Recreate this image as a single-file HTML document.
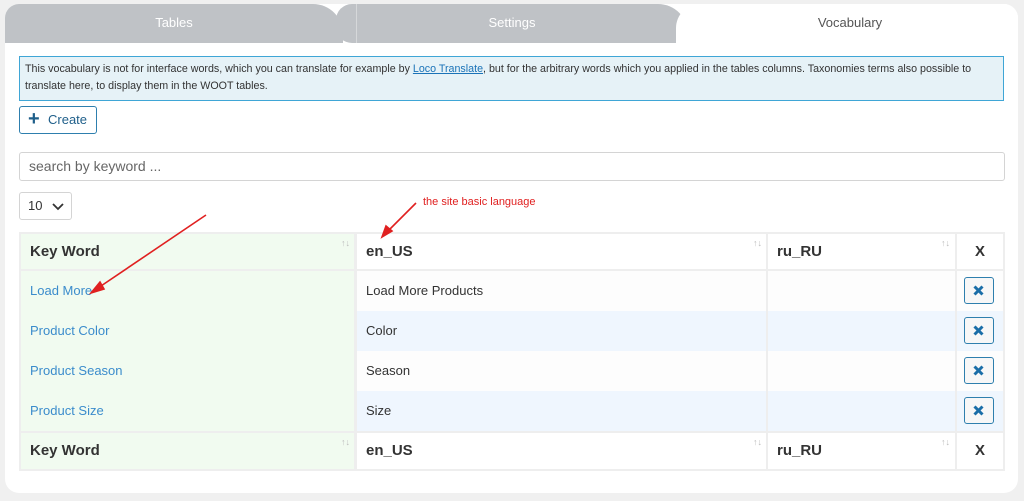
<!DOCTYPE html>
<html><head><meta charset="utf-8"><style>
*{box-sizing:border-box;margin:0;padding:0}
body{width:1024px;height:501px;background:#f0f0f0;font-family:"Liberation Sans",sans-serif;position:relative;overflow:hidden}
.a{position:absolute}
.panel{left:5px;top:4px;width:1013px;height:489px;background:#fff;border-radius:14px}
.tab{top:4px;height:39px;background:#bfc2c6;color:#fff;font-size:13px;text-align:center;line-height:38px}
.info{left:19px;top:56px;width:985px;height:45px;background:#e6f2f7;border:1px solid #3fa6d6;font-size:10.7px;color:#333;line-height:17px;padding:4px 5px}
.info a{color:#1a73b8;text-decoration:underline}
.btn{left:19px;top:106px;width:78px;height:28px;border:1px solid #2e7fae;border-radius:3px;color:#1f5f8a;font-size:13px;line-height:26px;padding-left:28px}
.search{left:19px;top:152px;width:986px;height:29px;border:1px solid #d4d4d4;border-radius:3px;color:#666;font-size:14px;line-height:27px;padding-left:9px}
.sel{left:19px;top:192px;width:53px;height:28px;border:1px solid #d4d4d4;border-radius:3px;font-size:13px;line-height:26px;padding-left:8px;color:#333}
.c{font-size:13px;line-height:40px;padding-left:9px;color:#333}
.h{font-size:15px;font-weight:bold;color:#333;line-height:36px;padding-left:9px}
.kw{background:#f1fbf0}
.k{color:#3b8ccc}
.x{width:30px;height:27px;border:1.5px solid #2e7fae;border-radius:3px;background:#f7f7f7}
.x svg{position:absolute;left:8px;top:7px}
.ar{font-size:9px;color:#bbb;line-height:10px}
</style></head><body>
<div class="a panel"></div>
<div class="a tab" style="left:336px;width:352px;border-radius:16px 30px 0 16px">Settings</div>
<div class="a tab" style="left:5px;width:338px;border-radius:14px 30px 0 0">Tables</div>
<div class="a" style="left:356px;top:4px;width:1px;height:39px;background:#d6d8da"></div>
<div class="a" style="left:676px;top:4px;width:342px;height:40px;background:#fff;border-radius:24px 14px 0 0;color:#555;font-size:13px;text-align:center;line-height:38px;padding-left:6px">Vocabulary</div>
<div class="a" style="left:5px;top:43px;width:1013px;height:10px;background:#fff"></div>
<div class="a info">This vocabulary is not for interface words, which you can translate for example by <a>Loco Translate</a>, but for the arbitrary words which you applied in the tables columns. Taxonomies terms also possible to translate here, to display them in the WOOT tables.</div>
<div class="a btn"><span class="a" style="left:8px;top:-1px;font-size:20px;font-weight:bold;color:#1f5f8a">+</span>Create</div>
<div class="a search">search by keyword ...</div>
<div class="a sel">10 <svg class="a" style="left:32px;top:10px" width="12" height="8"><path d="M1 1L6 6L11 1" stroke="#333" stroke-width="1.8" fill="none"/></svg></div>
<div class="a" style="left:423px;top:196px;font-size:11px;color:#e02020">the site basic language</div>
<!-- table -->
<div class="a" style="left:19px;top:232px;width:986px;height:239px;background:#eee"></div>
<div class="a kw h" style="left:21px;top:234px;width:333px;height:35px">Key Word</div>
<div class="a h" style="left:357px;top:234px;width:409px;height:35px;background:#fff">en_US</div>
<div class="a h" style="left:768px;top:234px;width:187px;height:35px;background:#fff">ru_RU</div>
<div class="a h" style="left:957px;top:234px;width:46px;height:35px;background:#fff;padding:0;text-align:center">X</div>
<div class="a ar" style="left:341px;top:238px">↑↓</div><div class="a ar" style="left:753px;top:238px">↑↓</div><div class="a ar" style="left:941px;top:238px">↑↓</div>

<div class="a kw c k" style="left:21px;top:271px;width:333px;height:40px">Load More</div>
<div class="a c" style="left:357px;top:271px;width:409px;height:40px;background:#fdfdfd">Load More Products</div>
<div class="a" style="left:768px;top:271px;width:187px;height:40px;background:#fdfdfd"></div>
<div class="a" style="left:957px;top:271px;width:46px;height:40px;background:#fdfdfd"></div>

<div class="a kw c k" style="left:21px;top:311px;width:333px;height:40px">Product Color</div>
<div class="a c" style="left:357px;top:311px;width:409px;height:40px;background:#eff6fe">Color</div>
<div class="a" style="left:768px;top:311px;width:187px;height:40px;background:#eff6fe"></div>
<div class="a" style="left:957px;top:311px;width:46px;height:40px;background:#eff6fe"></div>

<div class="a kw c k" style="left:21px;top:351px;width:333px;height:40px">Product Season</div>
<div class="a c" style="left:357px;top:351px;width:409px;height:40px;background:#fdfdfd">Season</div>
<div class="a" style="left:768px;top:351px;width:187px;height:40px;background:#fdfdfd"></div>
<div class="a" style="left:957px;top:351px;width:46px;height:40px;background:#fdfdfd"></div>

<div class="a kw c k" style="left:21px;top:391px;width:333px;height:40px">Product Size</div>
<div class="a c" style="left:357px;top:391px;width:409px;height:40px;background:#eff6fe">Size</div>
<div class="a" style="left:768px;top:391px;width:187px;height:40px;background:#eff6fe"></div>
<div class="a" style="left:957px;top:391px;width:46px;height:40px;background:#eff6fe"></div>

<div class="a x" style="left:964px;top:277px"><svg width="11" height="11"><path d="M1.5 1.5L9.5 9.5M9.5 1.5L1.5 9.5" stroke="#1a6ea8" stroke-width="3"/></svg></div>
<div class="a x" style="left:964px;top:317px"><svg width="11" height="11"><path d="M1.5 1.5L9.5 9.5M9.5 1.5L1.5 9.5" stroke="#1a6ea8" stroke-width="3"/></svg></div>
<div class="a x" style="left:964px;top:357px"><svg width="11" height="11"><path d="M1.5 1.5L9.5 9.5M9.5 1.5L1.5 9.5" stroke="#1a6ea8" stroke-width="3"/></svg></div>
<div class="a x" style="left:964px;top:397px"><svg width="11" height="11"><path d="M1.5 1.5L9.5 9.5M9.5 1.5L1.5 9.5" stroke="#1a6ea8" stroke-width="3"/></svg></div>

<div class="a kw h" style="left:21px;top:433px;width:333px;height:36px">Key Word</div>
<div class="a h" style="left:357px;top:433px;width:409px;height:36px;background:#fff">en_US</div>
<div class="a h" style="left:768px;top:433px;width:187px;height:36px;background:#fff">ru_RU</div>
<div class="a h" style="left:957px;top:433px;width:46px;height:36px;background:#fff;padding:0;text-align:center">X</div>
<div class="a ar" style="left:341px;top:437px">↑↓</div><div class="a ar" style="left:753px;top:437px">↑↓</div><div class="a ar" style="left:941px;top:437px">↑↓</div>
<svg class="a" style="left:0;top:0" width="1024" height="501"><g stroke="#e02020" stroke-width="1.6" fill="#e02020">
<line x1="206" y1="215" x2="98" y2="288"/><polygon points="91,293 100,282 104,289"/>
<line x1="416" y1="203" x2="387" y2="232"/><polygon points="382,237 386,226 392,231"/></g></svg>
</body></html>
